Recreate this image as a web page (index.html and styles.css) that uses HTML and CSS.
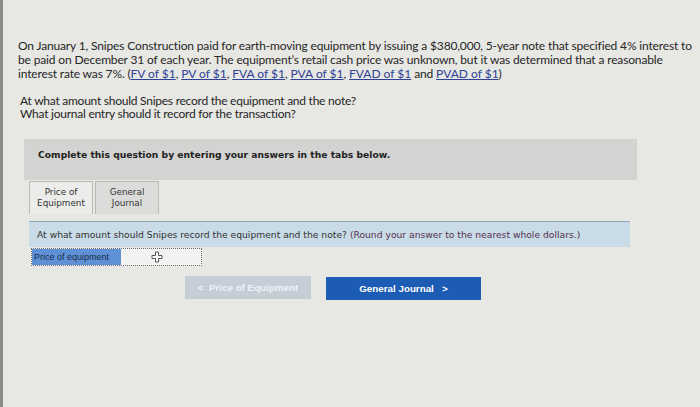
FILE: index.html
```html
<!DOCTYPE html>
<html>
<head>
<meta charset="utf-8">
<link rel="stylesheet" href="styles.css">
</head>
<body>
<div class="page">
  <p class="intro">On January 1, Snipes Construction paid for earth-moving equipment by issuing a $380,000, 5-year note that specified 4% interest to be paid on December 31 of each year. The equipment’s retail cash price was unknown, but it was determined that a reasonable interest rate was 7%. (<a href="#">FV of $1</a>, <a href="#">PV of $1</a>, <a href="#">FVA of $1</a>, <a href="#">PVA of $1</a>, <a href="#">FVAD of $1</a> and <a href="#">PVAD of $1</a>)</p>
  <p class="ask">At what amount should Snipes record the equipment and the note?<br>What journal entry should it record for the transaction?</p>
  <div class="complete">Complete this question by entering your answers in the tabs below.</div>
  <div class="tabs">
    <div class="tab active">Price of<br>Equipment</div>
    <div class="tab">General<br>Journal</div>
  </div>
  <div class="prompt">At what amount should Snipes record the equipment and the note? <span class="round">(Round your answer to the nearest whole dollars.)</span></div>
  <div class="entry">
    <div class="label">Price of equipment</div>
    <div class="value">
      <svg width="12" height="12" viewBox="0 0 12 12"><path d="M4.5 1h3v3.5H11v3H7.5V11h-3V7.5H1v-3h3.5z" fill="#fff" stroke="#555" stroke-width="1"/></svg>
    </div>
  </div>
  <div class="nav">
    <div class="btn prev">&lt;&nbsp;&nbsp;Price of Equipment</div>
    <div class="btn next">General Journal&nbsp;&nbsp;&nbsp;&gt;</div>
  </div>
</div>
</body>
</html>
```

FILE: styles.css
```css
html, body {
  margin: 0;
  height: 100%;
}
body {
  background: #e7e7e4;
  border-left: 3px solid #8c8c89;
  box-sizing: border-box;
  font-family: "Lato", "Open Sans", sans-serif;
  color: #262626;
  overflow: hidden;
}
.page {
  padding: 39px 0 0 15px;
}
.intro {
  margin: 0;
  font-size: 12px;
  letter-spacing: -0.15px;
  line-height: 14px;
  width: 684px;
}
.intro a {
  display: inline-block;
  line-height: 14px;
  color: #2f4196;
  text-decoration: underline;
  letter-spacing: 0;
}
.ask {
  margin: 13px 0 0 2px;
  font-size: 12px;
  letter-spacing: -0.25px;
  line-height: 13px;
}
.complete {
  margin: 19px 0 0 6px;
  width: 613px;
  height: 41px;
  box-sizing: border-box;
  background: #d3d3d1;
  padding: 10px 0 0 14px;
  font-family: "DejaVu Sans", Verdana, sans-serif;
  font-weight: bold;
  font-size: 9.2px;
  color: #222;
}
.tabs {
  display: flex;
  margin: 1px 0 0 11px;
  gap: 2px;
}
.tab {
  width: 64px;
  height: 33px;
  box-sizing: border-box;
  border: 1px solid #b9b9b7;
  border-bottom: none;
  background: #dcdcda;
  font-family: "DejaVu Sans", Verdana, sans-serif;
  font-size: 8.8px;
  line-height: 11px;
  text-align: center;
  padding-top: 5px;
  color: #333;
}
.tab.active {
  background: #ececea;
}
.prompt {
  margin: 7px 0 0 11px;
  width: 601px;
  height: 26px;
  box-sizing: border-box;
  background: #c9dbe6;
  border-top: 1px solid #8fa6b4;
  padding: 7px 0 0 8px;
  font-family: "DejaVu Sans", Verdana, sans-serif;
  font-size: 9.2px;
  color: #333;
}
.round {
  color: #55304f;
}
.entry {
  display: flex;
  margin: 1px 0 0 13px;
  width: 171px;
  height: 18px;
  box-sizing: border-box;
  border: 1px dotted #6c6c6c;
  background: #f2f2f0;
}
.label {
  width: 87px;
  background: #5e91d6;
  font-family: "Liberation Sans", Arial, sans-serif;
  font-size: 9px;
  line-height: 16px;
  padding-left: 2px;
  color: #1d2c4a;
}
.value {
  flex: 1;
  display: flex;
  align-items: center;
  padding-left: 30px;
}
.nav {
  display: flex;
  gap: 15px;
  margin: 10px 0 0 167px;
}
.btn {
  height: 23px;
  box-sizing: border-box;
  font-family: "Liberation Sans", Arial, sans-serif;
  font-weight: bold;
  font-size: 9.8px;
  color: #fff;
  display: flex;
  align-items: center;
  justify-content: center;
}
.prev {
  width: 126px;
  background: #c6cdd7;
  color: #eef1f5;
}
.next {
  width: 155px;
  background: #1c5cb4;
  margin-top: 1px;
}
```
